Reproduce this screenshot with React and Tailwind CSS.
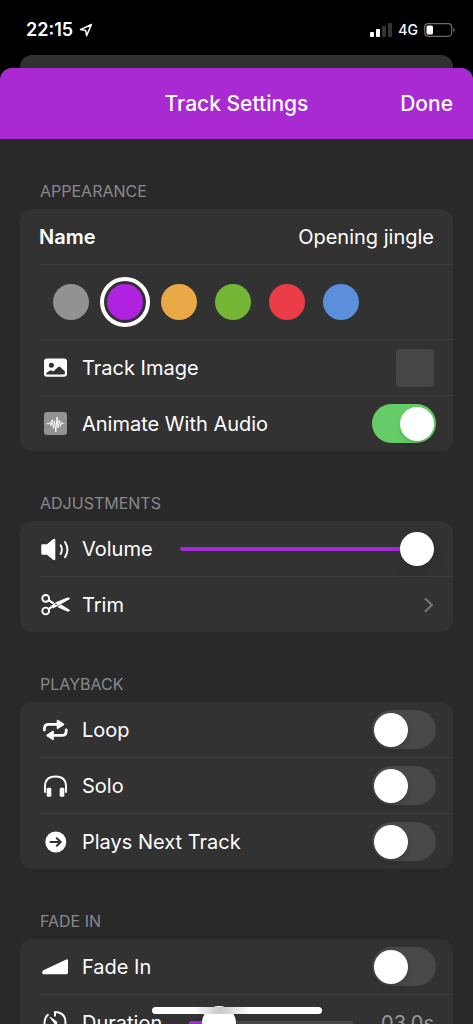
import { useState } from "react";

const COLORS = [
    { name: "Gray", className: "bg-[#929292]" },
    { name: "Purple", className: "bg-[#ae22e0]" },
    { name: "Orange", className: "bg-[#e9a946]" },
    { name: "Green", className: "bg-[#75b636]" },
    { name: "Red", className: "bg-[#ea3d47]" },
    { name: "Blue", className: "bg-[#5b8edb]" },
];

/* ---------- Icons ---------- */

function Icon({ children }) {
    return (
        <svg viewBox="0 0 32 32" className="size-8 shrink-0" fill="none" aria-hidden="true">
            {children}
        </svg>
    );
}

function ImageIcon() {
    return (
        <Icon>
            <rect x="5" y="6.5" width="23" height="18.3" rx="3" fill="#fff" />
            <circle cx="12.4" cy="13.2" r="2.5" fill="#323232" />
            <path d="M7.3 22.4v-1.3l3.7-2.7q.7-.4 1.4 0l1.8 1.2 5-4.7q1-.9 2 0l4.6 4.4v3.1z" fill="#323232" />
        </Icon>
    );
}

function WaveformIcon() {
    return (
        <Icon>
            <rect x="5" y="4" width="23" height="23" rx="3" fill="#929292" />
            <path
                d="M8 15.7h2l.9-1.500 1.1 3.600 1.200-6 1.300 8.500 1-7.500 1.300 11L18 9l1.100 11 1.200-8 1.200 6.500 1-4.500.9 1.700H25"
                stroke="#fff"
                strokeWidth=".9"
                strokeLinejoin="round"
                strokeLinecap="round"
            />
        </Icon>
    );
}

function SpeakerIcon() {
    return (
        <Icon>
            <path d="M3.3 11.2H8l6-5q2.3-1.2 2.3.8v19q0 2-2.3.8l-6-5H3.3q-1-.1-1-1.2v-8.2q0-1.1 1-1.2z" fill="#fff" />
            <path d="M21.6 12.3q2.6 4.2 0 8.6M26 9q4.800 7.600 0 15.200" stroke="#fff" strokeWidth="1.9" strokeLinecap="round" />
        </Icon>
    );
}

function ScissorsIcon() {
    return (
        <Icon>
            <circle cx="6.7" cy="9.4" r="3.4" stroke="#fff" strokeWidth="1.9" />
            <circle cx="6.7" cy="22" r="3.4" stroke="#fff" strokeWidth="1.9" />
            <path d="M9.6 11.3l5 3.1M9.6 20.2l6-4.6" stroke="#fff" strokeWidth="2.2" />
            <path d="M13.2 16.4q1.6-2.4 4.3-3.5l9.6-4q2-.7 3.8 0 .4.8-.8 1.500l-12.4 7-4 2.2z" fill="#fff" />
            <path d="M18.800 17.500l3.400-2 7.900 5.100q1.2.8.8 1.500-1.8.7-3.8-.2l-7.800-3.300z" fill="#fff" />
            <circle cx="17" cy="15.4" r=".8" fill="#323232" />
        </Icon>
    );
}

function LoopIcon() {
    return (
        <Icon>
            <path
                d="M5.4 16v-1.4q0-4.2 4.2-4.2H19M27.2 15.8v1.4q0 4.2-4.2 4.2h-9.4"
                stroke="#fff"
                strokeWidth="2.8"
                strokeLinecap="round"
            />
            <path d="M17.700 7q0-2 1.700-1l5.300 3.500q1.100.900 0 1.800l-5.300 3.500q-1.700 1-1.700-1z" fill="#fff" />
            <path d="M14.900 24.800q0 2-1.700 1l-5.300-3.500q-1.100-.900 0-1.800l5.300-3.500q1.700-1 1.700 1z" fill="#fff" />
        </Icon>
    );
}

function HeadphonesIcon() {
    return (
        <Icon>
            <path d="M6 22v-5.5Q6 6.5 16.5 6.5T27 16.5V22" stroke="#fff" strokeWidth="1.9" strokeLinecap="round" />
            <rect x="7.7" y="17.8" width="4.6" height="9" rx="1.4" fill="#fff" />
            <rect x="20.7" y="17.8" width="4.6" height="9" rx="1.4" fill="#fff" />
        </Icon>
    );
}

function NextIcon() {
    return (
        <Icon>
            <circle cx="16.8" cy="16" r="10.5" fill="#fff" />
            <path
                d="M11.6 16h9.8M17.8 12.3l3.9 3.7-3.9 3.7"
                stroke="#323232"
                strokeWidth="2.1"
                strokeLinecap="round"
                strokeLinejoin="round"
            />
        </Icon>
    );
}

function FadeIcon() {
    return (
        <Icon>
            <path d="M4.4 19.2L27.2 8.4q1.8-.7 1.8 1v12.4q0 1.4-1.4 1.4H4.7q-1.4 0-1.4-1.2v-1.2q0-1 1.1-1.6z" fill="#fff" />
        </Icon>
    );
}

function TimerIcon() {
    return (
        <Icon>
            <path
                d="M16 8.8V5q10.5.4 10.5 10.5T16 26 5.5 15.5q0-4.6 3.4-7.7"
                stroke="#fff"
                strokeWidth="1.9"
                strokeLinecap="round"
                strokeLinejoin="round"
            />
            <path d="M10.8 10.4q-.2-.9.8-.5l6.2 4.6q1 1.3 0 2.4-1.3.9-2.5-.2z" fill="#fff" />
        </Icon>
    );
}

/* ---------- Building blocks ---------- */

function Section({ title, children }) {
    return (
        <section>
            <h2 className="flex h-[70px] items-end px-5 pb-1.5 text-base leading-6 text-[#8a8a8d]">{title}</h2>
            <div className="rounded-xl bg-[#323232]">{children}</div>
        </section>
    );
}

function Divider() {
    return <div className="ml-5 h-px bg-[#3c3c3d]" />;
}

function Row({ icon, label, htmlFor, children }) {
    return (
        <div className="flex h-[55px] items-center gap-[11px] px-[19px]">
            {icon}
            <label htmlFor={htmlFor} className="shrink-0">
                {label}
            </label>
            {children}
        </div>
    );
}

function Switch({ id, defaultChecked = false }) {
    return (
        <input
            id={id}
            type="checkbox"
            role="switch"
            defaultChecked={defaultChecked}
            className="-mr-0.5 ml-auto flex h-[39px] w-16 shrink-0 appearance-none items-center rounded-full bg-[#48484a] px-0.5 transition-colors before:size-[34px] before:rounded-full before:bg-white before:shadow-md before:transition-transform checked:bg-[#65cd68] checked:before:translate-x-[26px]"
        />
    );
}

function Slider({ id, value, onChange }) {
    return (
        <input
            id={id}
            type="range"
            min="0"
            max="100"
            value={value}
            onChange={(e) => onChange(Number(e.target.value))}
            style={{ "--fill": `${value}%` }}
            className="h-[34px] min-w-0 flex-1 appearance-none bg-transparent [&::-webkit-slider-runnable-track]:h-1 [&::-webkit-slider-runnable-track]:rounded-full [&::-webkit-slider-runnable-track]:bg-[linear-gradient(to_right,#a52bd4_var(--fill),#48484a_var(--fill))] [&::-webkit-slider-thumb]:-mt-[15px] [&::-webkit-slider-thumb]:size-[34px] [&::-webkit-slider-thumb]:appearance-none [&::-webkit-slider-thumb]:rounded-full [&::-webkit-slider-thumb]:bg-white [&::-webkit-slider-thumb]:shadow-lg"
        />
    );
}

function StatusBar() {
    return (
        <div className="flex h-[55px] shrink-0 items-center justify-between pt-1 pr-[18px] pl-[26px]">
            <div className="flex items-center gap-1.5">
                <span className="text-lg font-semibold">22:15</span>
                <svg viewBox="0 0 14 14" className="size-3.5" fill="none" aria-hidden="true">
                    <path d="M12.4 1.5L1.5 6.6l5.2.9.9 5.2z" stroke="#fff" strokeWidth="1.5" strokeLinejoin="round" />
                </svg>
            </div>
            <div className="flex items-center gap-1.5">
                <svg viewBox="0 0 22 14" className="h-3.5 w-[22px]" aria-hidden="true">
                    <rect x="0" y="9" width="4" height="5" rx="1" fill="#fff" />
                    <rect x="6" y="6" width="4" height="8" rx="1" fill="#fff" />
                    <rect x="12" y="3" width="4" height="11" rx="1" fill="#333335" />
                    <rect x="18" y="0" width="4" height="14" rx="1" fill="#333335" />
                </svg>
                <span className="text-sm font-medium">4G</span>
                <svg viewBox="0 0 31 14" className="h-3.5 w-[31px]" fill="none" aria-hidden="true">
                    <rect x=".7" y=".7" width="27" height="12.6" rx="3.5" stroke="#6b6b6d" strokeWidth="1.2" />
                    <rect x="2.5" y="2.5" width="6.5" height="9" rx="1.5" fill="#fff" />
                    <path d="M29.3 4.8q1.500.7 1.500 2.200t-1.500 2.200z" fill="#6b6b6d" />
                </svg>
            </div>
        </div>
    );
}

/* ---------- Page ---------- */

export default function App() {
    const [color, setColor] = useState("Purple");
    const [volume, setVolume] = useState(100);
    const [duration, setDuration] = useState(10);

    return (
        <div className="relative flex h-screen flex-col overflow-hidden bg-black font-['Inter',sans-serif] text-xl text-white">
            <StatusBar />
            <div className="mx-5 h-[13px] shrink-0 rounded-t-xl bg-[#313134]" />

            <div className="flex min-h-0 flex-1 flex-col overflow-hidden rounded-t-xl bg-[#292929]">
                <header className="grid h-[71px] shrink-0 grid-cols-[1fr_auto_1fr] items-center bg-[#a92ad2] px-5 text-[21px] font-medium">
                    <h1 className="col-start-2">Track Settings</h1>
                    <button type="button" className="justify-self-end">
                        Done
                    </button>
                </header>

                <main className="min-h-0 flex-1 overflow-y-auto px-5 pb-10 [scrollbar-width:none]">
                    <Section title="APPEARANCE">
                        <Row label={<span className="font-semibold">Name</span>} htmlFor="name">
                            <input
                                id="name"
                                type="text"
                                defaultValue="Opening jingle"
                                className="min-w-0 flex-1 bg-transparent text-right outline-none"
                            />
                        </Row>
                        <Divider />
                        <fieldset className="flex h-[74px] items-center gap-[18px] px-[33px]">
                            {COLORS.map((c) => (
                                <input
                                    key={c.name}
                                    type="radio"
                                    name="color"
                                    aria-label={c.name}
                                    checked={color === c.name}
                                    onChange={() => setColor(c.name)}
                                    className={`size-9 appearance-none rounded-full outline-offset-3 outline-white checked:outline-4 ${c.className}`}
                                />
                            ))}
                        </fieldset>
                        <Divider />
                        <Row icon={<ImageIcon />} label="Track Image" htmlFor="image">
                            <button
                                id="image"
                                type="button"
                                aria-label="Track Image"
                                className="ml-auto size-[38px] rounded bg-[#464646]"
                            />
                        </Row>
                        <Divider />
                        <Row icon={<WaveformIcon />} label="Animate With Audio" htmlFor="animate">
                            <Switch id="animate" defaultChecked />
                        </Row>
                    </Section>

                    <Section title="ADJUSTMENTS">
                        <Row icon={<SpeakerIcon />} label="Volume" htmlFor="volume">
                            <div className="flex flex-1 pl-4">
                                <Slider id="volume" value={volume} onChange={setVolume} />
                            </div>
                        </Row>
                        <Divider />
                        <button type="button" className="flex h-[55px] w-full items-center gap-[11px] px-[19px]">
                            <ScissorsIcon />
                            Trim
                            <svg viewBox="0 0 10 16" className="ml-auto h-4 w-2.5" fill="none" aria-hidden="true">
                                <path d="M1 1.2L7.800 8 1 14.800" stroke="#737376" strokeWidth="2.2" />
                            </svg>
                        </button>
                    </Section>

                    <Section title="PLAYBACK">
                        <Row icon={<LoopIcon />} label="Loop" htmlFor="loop">
                            <Switch id="loop" />
                        </Row>
                        <Divider />
                        <Row icon={<HeadphonesIcon />} label="Solo" htmlFor="solo">
                            <Switch id="solo" />
                        </Row>
                        <Divider />
                        <Row icon={<NextIcon />} label="Plays Next Track" htmlFor="next">
                            <Switch id="next" />
                        </Row>
                    </Section>

                    <Section title="FADE IN">
                        <Row icon={<FadeIcon />} label="Fade In" htmlFor="fade">
                            <Switch id="fade" />
                        </Row>
                        <Divider />
                        <Row icon={<TimerIcon />} label="Duration" htmlFor="duration">
                            <div className="flex flex-1 items-center gap-7 pl-4">
                                <Slider id="duration" value={duration} onChange={setDuration} />
                                <output htmlFor="duration" className="text-[#98989b]">
                                    03.0s
                                </output>
                            </div>
                        </Row>
                    </Section>
                </main>
            </div>

            {/* Home indicator */}
            <div className="pointer-events-none absolute bottom-2.5 left-1/2 h-[7px] w-[170px] -translate-x-1/2 rounded-full bg-[linear-gradient(to_right,#fff_25%,#c8c8c8_40%,#fff_58%)]" />
        </div>
    );
}
